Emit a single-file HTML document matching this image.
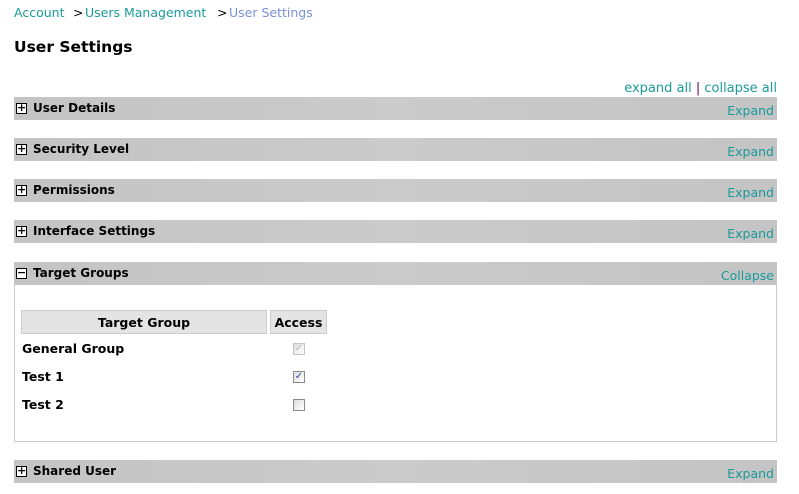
<!DOCTYPE html>
<html><head><style>
body{margin:0;width:799px;height:494px;background:#fff;font-family:"DejaVu Sans","Liberation Sans",sans-serif;position:relative;overflow:hidden}
.a{position:absolute;white-space:nowrap}
.l{color:#1a9a9a;font-size:12.5px}
.bar{position:absolute;left:14px;width:763px;height:23px;background:linear-gradient(90deg,#c4c4c4,#cbcbcb 50%,#c4c4c4)}
.bar .t{position:absolute;left:19px;top:4px;font-weight:bold;font-size:12px;color:#000}
.bar .ic{position:absolute;left:2px;top:6px;width:11px;height:11px;border:1px solid #000;box-sizing:border-box;background:#fff;font-size:11px;line-height:8px;text-align:center;font-weight:bold}
.bar .e{position:absolute;right:3px;top:6px;color:#1a9a9a;font-size:12.5px}
.cb{position:absolute;left:293px;width:12px;height:12px;border:1px solid #8a8a8a;box-sizing:border-box;background:linear-gradient(135deg,#ddd,#fff)}
.r{position:absolute;left:22px;font-weight:bold;font-size:12.5px}
</style></head><body>
<div class="a l" style="left:14px;top:5px">Account</div>
<div class="a" style="left:73px;top:5px;font-size:12.5px">&gt;</div>
<div class="a l" style="left:85px;top:5px">Users Management</div>
<div class="a" style="left:217px;top:5px;font-size:12.5px">&gt;</div>
<div class="a" style="left:229px;top:5px;font-size:12.5px;color:#7a8fd9">User Settings</div>
<div class="a" style="left:14px;top:38px;font-size:15.5px;font-weight:bold">User Settings</div>
<div class="a l" style="right:22px;top:81px;font-size:13px">expand all <span style="color:#660066">|</span> collapse all</div>

<div class="bar" style="top:97px"><div class="ic">+</div><div class="t">User Details</div><div class="e">Expand</div></div>
<div class="bar" style="top:138px"><div class="ic">+</div><div class="t">Security Level</div><div class="e">Expand</div></div>
<div class="bar" style="top:179px"><div class="ic">+</div><div class="t">Permissions</div><div class="e">Expand</div></div>
<div class="bar" style="top:220px"><div class="ic">+</div><div class="t">Interface Settings</div><div class="e">Expand</div></div>
<div style="position:absolute;left:14px;top:262px;width:763px;height:180px;border:1px solid #ccc;box-sizing:border-box"></div>
<div class="bar" style="top:262px"><div class="ic">−</div><div class="t">Target Groups</div><div class="e">Collapse</div></div>
<div style="position:absolute;left:21px;top:310px;width:246px;height:24px;background:#e4e4e4;border:1px solid #ccc;box-sizing:border-box;text-align:center;font-weight:bold;font-size:12.5px;line-height:23px">Target Group</div>
<div style="position:absolute;left:270px;top:310px;width:57px;height:24px;background:#e4e4e4;border:1px solid #ccc;box-sizing:border-box;text-align:center;font-weight:bold;font-size:12.5px;line-height:23px">Access</div>
<div class="r" style="top:341px">General Group</div>
<div class="r" style="top:369px">Test 1</div>
<div class="r" style="top:397px">Test 2</div>
<div class="cb" style="top:343px;border-color:#c4c4c4;color:#bbb;font-size:10px;line-height:10px;text-align:center">✓</div>
<div class="cb" style="top:371px;color:#2a4aa0;font-size:10px;line-height:10px;text-align:center;font-weight:bold">✓</div>
<div class="cb" style="top:399px"></div>
<div class="bar" style="top:460px"><div class="ic">+</div><div class="t">Shared User</div><div class="e">Expand</div></div>
</body></html>
